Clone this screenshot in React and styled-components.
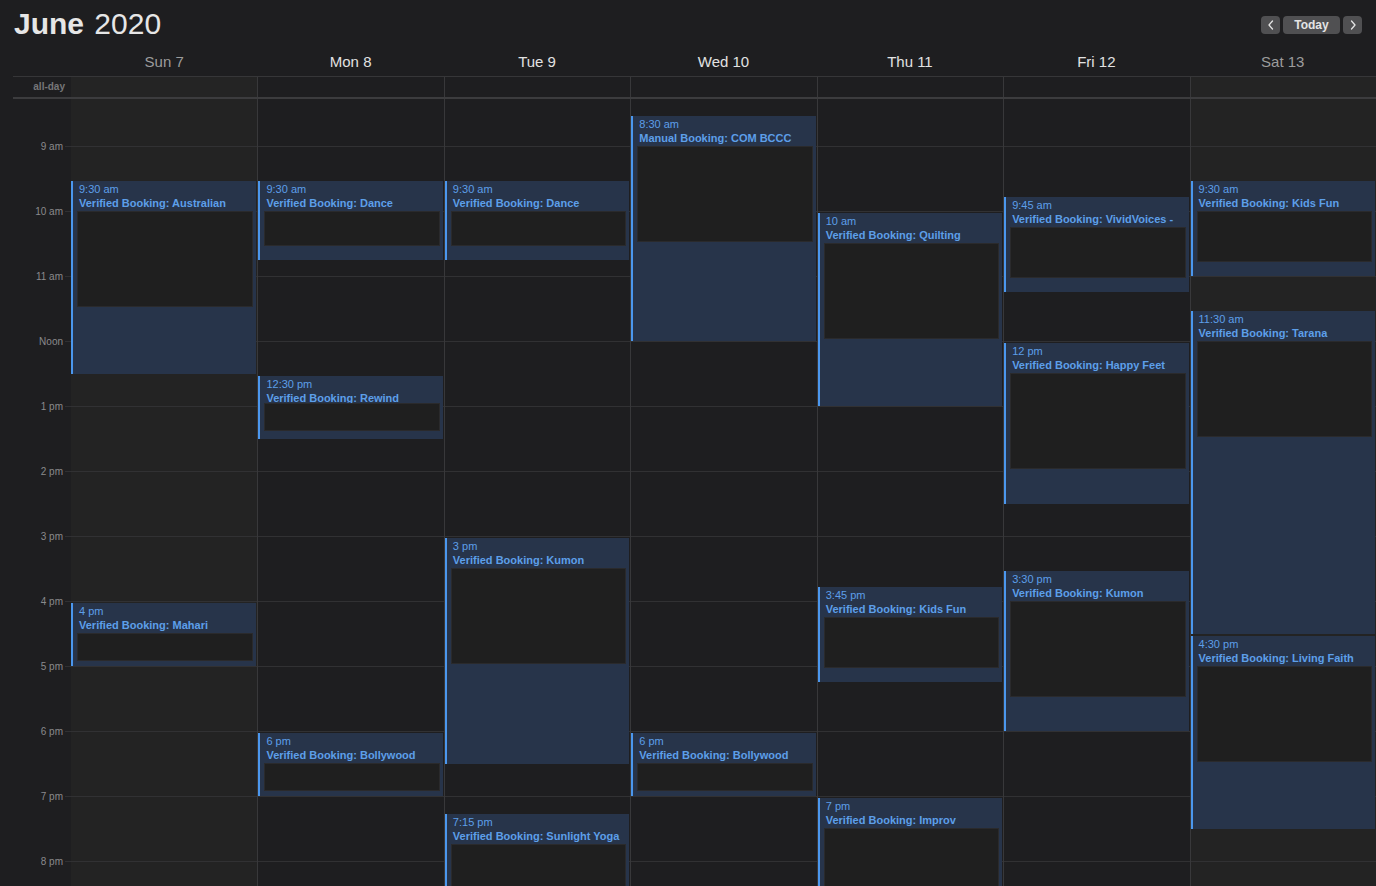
import React from "react";
import styled, { createGlobalStyle } from "styled-components";

const HOUR = 65;
const OFFSET = 47;

const GlobalStyle = createGlobalStyle`
  html, body {
    margin: 0;
    padding: 0;
    background: #1e1e20;
    overflow: hidden;
  }
  body {
    font-family: "Liberation Sans", Arial, sans-serif;
  }
  * { box-sizing: border-box; }
`;

const Page = styled.div`
  width: 1376px;
  height: 886px;
  display: flex;
  flex-direction: column;
  overflow: hidden;
  background: #1e1e20;
`;

const TopBar = styled.div`
  height: 48px;
  display: flex;
  align-items: center;
  justify-content: space-between;
  padding: 0 14px;
  flex-shrink: 0;
`;

const Title = styled.h1`
  margin: 0;
  font-size: 30px;
  line-height: 1;
  font-weight: 400;
  color: #e6e6e6;
  b { font-weight: 700; margin-right: 2px; }
`;

const NavGroup = styled.div`
  display: flex;
  gap: 3px;
  margin-top: 2px;
`;

const NavButton = styled.button`
  height: 18px;
  width: ${(p) => (p.$wide ? "57px" : "19px")};
  padding: 0;
  border: none;
  border-radius: 4px;
  background: #505052;
  color: #e4e4e4;
  font-family: "Liberation Sans", Arial, sans-serif;
  font-size: 12px;
  font-weight: 700;
  display: flex;
  align-items: center;
  justify-content: center;
`;

const Grid = styled.div`
  display: grid;
  grid-template-columns: 58px repeat(7, 1fr);
  margin-left: 13px;
`;

const DayHeaderRow = styled(Grid)`
  height: 28px;
  flex-shrink: 0;
`;

const DayHeader = styled.div`
  display: flex;
  align-items: center;
  justify-content: center;
  font-size: 15px;
  color: ${(p) => (p.$weekend ? "#9c9c9c" : "#e2e2e2")};
  padding-bottom: 1px;
`;

const AllDayRow = styled(Grid)`
  height: 23px;
  border-top: 1px solid #363638;
  border-bottom: 2px solid #3c3c3e;
  flex-shrink: 0;
`;

const AllDayLabel = styled.div`
  font-size: 10px;
  font-weight: 700;
  color: #767678;
  display: flex;
  align-items: center;
  justify-content: flex-end;
  padding-right: 6px;
  padding-bottom: 2px;
`;

const AllDayCell = styled.div`
  background: ${(p) => (p.$weekend ? "#242424" : "transparent")};
  border-left: ${(p) => (p.$first ? "none" : "1px solid #38383a")};
`;

const Body = styled(Grid)`
  flex: 1;
  overflow: hidden;
  align-items: start;
`;

const Gutter = styled.div`
  display: flex;
  flex-direction: column;
`;

const GutterSlot = styled.div`
  height: ${(p) => p.$h}px;
  display: flex;
  justify-content: flex-end;
  align-items: flex-start;
  flex-shrink: 0;
`;

const HourLabel = styled.span`
  font-size: 10px;
  line-height: 12px;
  color: #8a8a8c;
  margin-top: -5px;
  margin-right: 2px;
`;

const Tick = styled.span`
  width: 6px;
  border-top: 1px solid #303032;
`;

const DayColumn = styled.div`
  position: relative;
  display: flex;
  flex-direction: column;
  background: ${(p) => (p.$weekend ? "#232323" : "transparent")};
  border-left: ${(p) => (p.$first ? "none" : "1px solid #38383a")};
  min-height: 900px;
`;

const Slot = styled.div`
  height: ${(p) => p.$h}px;
  flex-shrink: 0;
  border-top: ${(p) => (p.$line ? "1px solid #313133" : "none")};
`;

const EventBlock = styled.div`
  position: absolute;
  left: 0;
  right: 1px;
  background: #27344a;
  border-left: 2px solid #4b97ee;
  padding-top: 1px;
  display: flex;
  flex-direction: column;
  overflow: hidden;
`;

const EventLine = styled.div`
  font-size: 11px;
  line-height: 14px;
  padding-left: 6px;
  color: #5d9fe9;
  font-weight: ${(p) => (p.$bold ? 700 : 400)};
  white-space: nowrap;
  overflow: hidden;
`;

const EventBody = styled.div`
  margin: ${(p) => (p.$overlap ? "-2px" : "1px")} 3px 0 4px;
  background: #1f1f1f;
  border: 1px solid #2a2a2c;
  flex-shrink: 0;
`;

const Chevron = ({ dir }) => (
  <svg width="8" height="10" viewBox="0 0 8 10" fill="none">
    <path
      d={dir === "left" ? "M5.5 1 L2 5 L5.5 9" : "M2.5 1 L6 5 L2.5 9"}
      stroke="#e4e4e4"
      strokeWidth="1.3"
      strokeLinecap="round"
      strokeLinejoin="round"
    />
  </svg>
);

const days = [
  { label: "Sun 7", weekend: true },
  { label: "Mon 8" },
  { label: "Tue 9" },
  { label: "Wed 10" },
  { label: "Thu 11" },
  { label: "Fri 12" },
  { label: "Sat 13", weekend: true },
];

const V = "Verified Booking: ";

const events = [
  [
    { s: 9.5, e: 12.5, t: "9:30 am", n: V + "Australian" },
    { s: 16, e: 17, t: "4 pm", n: V + "Mahari" },
  ],
  [
    { s: 9.5, e: 10.75, t: "9:30 am", n: V + "Dance" },
    { s: 12.5, e: 13.5, t: "12:30 pm", n: V + "Rewind", overlap: true },
    { s: 18, e: 19, t: "6 pm", n: V + "Bollywood" },
  ],
  [
    { s: 9.5, e: 10.75, t: "9:30 am", n: V + "Dance" },
    { s: 15, e: 18.5, t: "3 pm", n: V + "Kumon" },
    { s: 19.25, e: 21, t: "7:15 pm", n: V + "Sunlight Yoga" },
  ],
  [
    { s: 8.5, e: 12, t: "8:30 am", n: "Manual Booking: COM BCCC" },
    { s: 18, e: 19, t: "6 pm", n: V + "Bollywood" },
  ],
  [
    { s: 10, e: 13, t: "10 am", n: V + "Quilting" },
    { s: 15.75, e: 17.25, t: "3:45 pm", n: V + "Kids Fun" },
    { s: 19, e: 21, t: "7 pm", n: V + "Improv" },
  ],
  [
    { s: 9.75, e: 11.25, t: "9:45 am", n: V + "VividVoices -" },
    { s: 12, e: 14.5, t: "12 pm", n: V + "Happy Feet" },
    { s: 15.5, e: 18, t: "3:30 pm", n: V + "Kumon" },
  ],
  [
    { s: 9.5, e: 11, t: "9:30 am", n: V + "Kids Fun" },
    { s: 11.5, e: 16.5, t: "11:30 am", n: V + "Tarana" },
    { s: 16.5, e: 19.5, t: "4:30 pm", n: V + "Living Faith" },
  ],
];

const hours = [
  "9 am", "10 am", "11 am", "Noon", "1 pm", "2 pm", "3 pm",
  "4 pm", "5 pm", "6 pm", "7 pm", "8 pm",
];

function CalendarEvent({ ev }) {
  const top = OFFSET + (ev.s - 9) * HOUR + 2;
  const h = (ev.e - ev.s) * HOUR - 2;
  const inner = h <= 65 ? h - 35 : Math.min(96, h - 44);
  return (
    <EventBlock style={{ top, height: h }}>
      <EventLine>{ev.t}</EventLine>
      <EventLine $bold>{ev.n}</EventLine>
      <EventBody $overlap={ev.overlap} style={{ height: inner }} />
    </EventBlock>
  );
}

export default function App() {
  return (
    <>
      <GlobalStyle />
      <Page>
        <TopBar>
          <Title>
            <b>June</b> 2020
          </Title>
          <NavGroup>
            <NavButton aria-label="Previous">
              <Chevron dir="left" />
            </NavButton>
            <NavButton $wide>Today</NavButton>
            <NavButton aria-label="Next">
              <Chevron dir="right" />
            </NavButton>
          </NavGroup>
        </TopBar>

        <DayHeaderRow>
          <div />
          {days.map((d) => (
            <DayHeader key={d.label} $weekend={d.weekend}>
              {d.label}
            </DayHeader>
          ))}
        </DayHeaderRow>

        <AllDayRow>
          <AllDayLabel>all-day</AllDayLabel>
          {days.map((d, i) => (
            <AllDayCell key={d.label} $weekend={d.weekend} $first={i === 0} />
          ))}
        </AllDayRow>

        <Body>
          <Gutter>
            <GutterSlot $h={OFFSET} />
            {hours.map((h) => (
              <GutterSlot key={h} $h={HOUR}>
                <HourLabel>{h}</HourLabel>
                <Tick />
              </GutterSlot>
            ))}
          </Gutter>
          {days.map((d, i) => (
            <DayColumn key={d.label} $weekend={d.weekend} $first={i === 0}>
              <Slot $h={OFFSET} />
              {hours.map((h) => (
                <Slot key={h} $h={HOUR} $line />
              ))}
              <Slot $h={HOUR} $line />
              {events[i].map((ev) => (
                <CalendarEvent key={ev.t + ev.n} ev={ev} />
              ))}
            </DayColumn>
          ))}
        </Body>
      </Page>
    </>
  );
}
